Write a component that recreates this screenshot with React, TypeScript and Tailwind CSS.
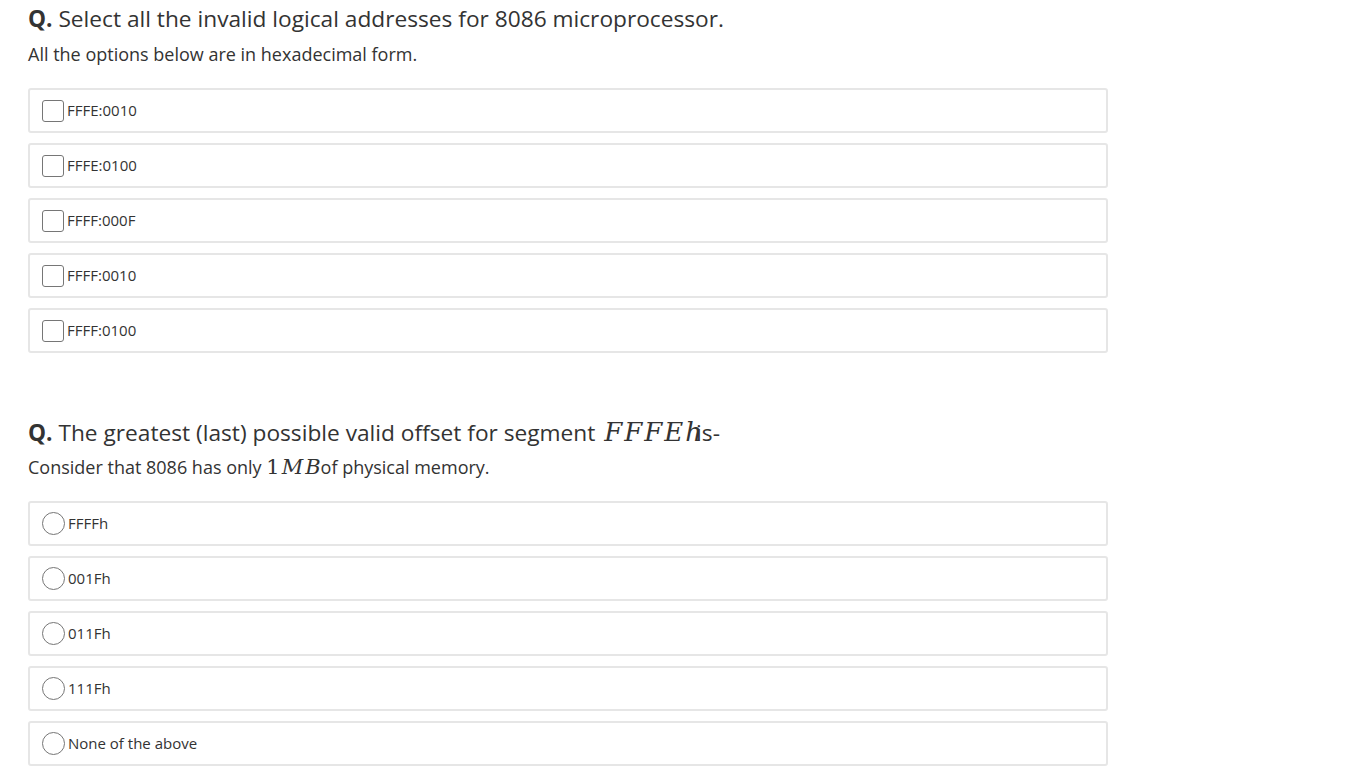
const Q1 = ['FFFE:0010', 'FFFE:0100', 'FFFF:000F', 'FFFF:0010', 'FFFF:0100']
const Q2 = ['FFFFh', '001Fh', '011Fh', '111Fh', 'None of the above']

const sans = { fontFamily: '"Open Sans", "Noto Sans", sans-serif' }
const math = { fontFamily: '"DejaVu Serif", serif' }

function Option({ label, kind }: { label: string; kind: 'check' | 'radio' }) {
    return (
        <div className="flex h-[45px] w-[1080px] items-center rounded-[3px] border-2 border-[#e6e6e6] bg-white pl-[12px]">
            {kind === 'check' ? (
                <span className="h-[22px] w-[22px] shrink-0 rounded-[3px] border border-[#767676] bg-white" />
            ) : (
                <span className="h-[23px] w-[23px] shrink-0 rounded-full border border-[#767676] bg-white" />
            )}
            <span className="ml-[3px] text-[15px] text-[#333]">{label}</span>
        </div>
    )
}

export default function App() {
    return (
        <div className="min-h-screen bg-white pl-[28px] text-[#333]" style={sans}>
            <div className="pt-[3px]">
                <h2 className="text-[22.7px] leading-[32px]">
                    <b className="font-bold">Q.</b> Select all the invalid logical addresses for 8086 microprocessor.
                </h2>
                <p className="mt-[6px] text-[18px] leading-[26px]">All the options below are in hexadecimal form.</p>
                <div className="mt-[21px] flex flex-col gap-[10px]">
                    {Q1.map((o) => (
                        <Option key={o} label={o} kind="check" />
                    ))}
                </div>
            </div>

            <div className="mt-[64px]">
                <h2 className="h-[32px] text-[22.7px] leading-[32px]">
                    <b className="font-bold">Q.</b> The greatest (last) possible valid offset for segment{' '}
                    <span className="ml-[3px] mr-[-8px] text-[26px] leading-none italic tracking-[2px]" style={math}>
                        FFFEh
                    </span>
                    is-
                </h2>
                <p className="mt-[5px] h-[26px] text-[18px] leading-[26px]">
                    Consider that 8086 has only{' '}
                    <span className="mr-[-2px] text-[21px] leading-none tracking-[2px]" style={math}>
                        1<i>MB</i>
                    </span>
                    of physical memory.
                </p>
                <div className="mt-[21px] flex flex-col gap-[10px]">
                    {Q2.map((o) => (
                        <Option key={o} label={o} kind="radio" />
                    ))}
                </div>
            </div>
        </div>
    )
}
